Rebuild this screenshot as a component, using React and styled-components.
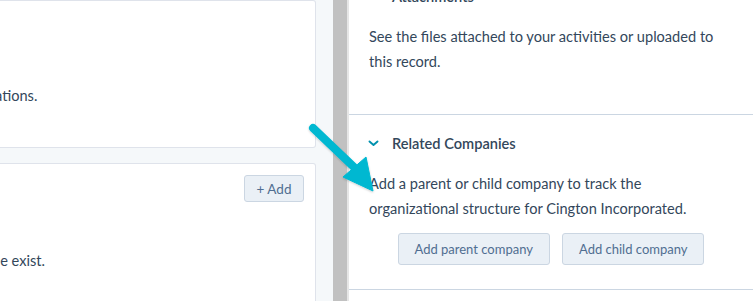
import React from 'react'
import styled, { createGlobalStyle } from 'styled-components'

const GlobalStyle = createGlobalStyle`
    html,body{
        margin:0;
        padding:0;
        background:#fff;
    }
    body{
        font-family:Lato,"Open Sans",sans-serif;
        color:#33475b;
        overflow:hidden;
    }
`

const Page = styled.div`
    position:relative;
    width:753px;
    height:301px;
    display:flex;
    overflow:hidden;
`

const LeftColumn = styled.div`
    width:333px;
    flex-shrink:0;
    background:#f5f8fa;
    display:flex;
    flex-direction:column;
    gap:15px;
`

const Card = styled.div`
    width:316px;
    height:${props=>props.height}px;
    flex-shrink:0;
    background:#fff;
    border:1px solid #dfe3eb;
    border-left:none;
    border-radius:0 3px 3px 0;
    box-sizing:border-box;
    display:flex;
    flex-direction:column;
    align-items:flex-end;
`

const CardText = styled.p`
    margin:0;
    align-self:flex-start;
    font-size:14.6px;
    line-height:24px;
    white-space:nowrap;
    margin-left:${props=>props.shift}px;
    margin-top:${props=>props.top}px;
`

const SmallButton = styled.button`
    margin:11px 11px 0 0;
    width:60px;
    height:27px;
    background:#eaf0f6;
    border:1px solid #cbd6e2;
    border-radius:3px;
    color:#506e91;
    font-family:inherit;
    font-size:13.5px;
    padding:0;
`

const Scrollbar = styled.div`
    width:14px;
    flex-shrink:0;
    background:#c1c1c1;
    border-right:2px solid #e6e6e6;
`

const Panel = styled.div`
    flex:1;
    margin-top:-32px;
    display:flex;
    flex-direction:column;
`

const Section = styled.section`
    padding:16px 20px ${props=>props.bottom}px 20px;
    border-bottom:1px solid #cbd6e2;
`

const SectionHeader = styled.div`
    display:flex;
    align-items:center;
    height:24px;
    gap:13px;
    font-size:14.6px;
    font-weight:600;
    color:#33475b;
`

const Chevron = styled.svg`
    width:11px;
    height:10px;
    flex-shrink:0;
    margin-left:-1px;
`

const SectionText = styled.p`
    margin:17px 0 0;
    font-size:14.6px;
    line-height:24.5px;
`

const ButtonRow = styled.div`
    display:flex;
    justify-content:center;
    gap:12px;
    margin-top:12px;
`

const GhostButton = styled.button`
    height:32px;
    padding:0 ${props=>props.pad}px;
    background:#eaf0f6;
    border:1px solid #cbd6e2;
    border-radius:3px;
    color:#506e91;
    font-family:inherit;
    font-size:13px;
`

const Arrow = styled.svg`
    position:absolute;
    left:0;
    top:0;
    pointer-events:none;
`

const App = () => {
    return (
        <>
            <GlobalStyle/>
            <Page>
                <LeftColumn>
                    <Card height={148}>
                        <CardText shift={-5} top={83}>ations.</CardText>
                    </Card>
                    <Card height={160}>
                        <SmallButton>+ Add</SmallButton>
                        <CardText shift={-8} top={47}>be exist.</CardText>
                    </Card>
                </LeftColumn>
                <Scrollbar/>
                <Panel>
                    <Section bottom={40}>
                        <SectionHeader>
                            <Chevron viewBox='0 0 11 10'/>
                            Attachments
                        </SectionHeader>
                        <SectionText>
                            See the files attached to your activities or uploaded to this record.
                        </SectionText>
                    </Section>
                    <Section bottom={24}>
                        <SectionHeader>
                            <Chevron viewBox='0 0 11 10'>
                                <path d='M1.5 3.5 L5.5 7 L9.5 3.5' fill='none' stroke='#0091ae' strokeWidth='1.9' strokeLinecap='round' strokeLinejoin='round'/>
                            </Chevron>
                            Related Companies
                        </SectionHeader>
                        <SectionText>
                            Add a parent or child company to track the organizational structure for Cington Incorporated.
                        </SectionText>
                        <ButtonRow>
                            <GhostButton pad={16}>Add parent company</GhostButton>
                            <GhostButton pad={16}>Add child company</GhostButton>
                        </ButtonRow>
                    </Section>
                </Panel>
                <Arrow width='753' height='301' viewBox='0 0 753 301'>
                    <defs>
                        <filter id='sh' x='-20%' y='-20%' width='140%' height='140%'>
                            <feDropShadow dx='0' dy='1' stdDeviation='1' floodColor='#000' floodOpacity='0.2'/>
                        </filter>
                    </defs>
                    <g filter='url(#sh)' fill='#00b8d1' stroke='#00b8d1'>
                        <line x1='313' y1='128' x2='357' y2='170' strokeWidth='8' strokeLinecap='round'/>
                        <polygon points='343,177 366,157 373,191' strokeWidth='1' strokeLinejoin='round'/>
                    </g>
                </Arrow>
            </Page>
        </>
    )
}

export default App
